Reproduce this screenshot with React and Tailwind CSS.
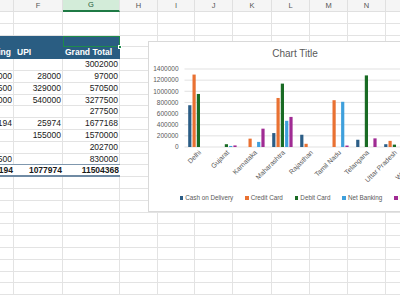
import React from 'react';

const COLS = [
  { key: 'E', w: 'w-[60px]' },
  { key: 'F', w: 'w-[49px]' },
  { key: 'G', w: 'w-[57px]' },
  { key: 'H', w: 'w-[38px]' },
  { key: 'I', w: 'w-[37px]' },
  { key: 'J', w: 'w-[38px]' },
  { key: 'K', w: 'w-[39px]' },
  { key: 'L', w: 'w-[38px]' },
  { key: 'M', w: 'w-[38px]' },
  { key: 'N', w: 'w-[38px]' },
  { key: 'O', w: 'w-[38px]' },
];

// pivot body: [net banking, upi, grand total]
const BODY = [
  ['', '', '3002000'],
  ['19000', '28000', '97000'],
  ['91500', '329000', '570500'],
  ['470000', '540000', '3277500'],
  ['', '', '277500'],
  ['811194', '25974', '1677168'],
  ['', '155000', '1570000'],
  ['', '', '202700'],
  ['236500', '', '830000'],
];

const SERIES = [
  { name: 'Cash on Delivery', color: '#2b5d86', dot: 'bg-[#2b5d86]' },
  { name: 'Credit Card', color: '#e97132', dot: 'bg-[#e97132]' },
  { name: 'Debit Card', color: '#196b24', dot: 'bg-[#196b24]' },
  { name: 'Net Banking', color: '#3fa0dc', dot: 'bg-[#3fa0dc]' },
  { name: 'UPI', color: '#a02b93', dot: 'bg-[#a02b93]' },
];

const STATES = [
  ['Delhi', [750000, 1300000, 952000, 0, 0]],
  ['Gujarat', [0, 0, 50000, 19000, 28000]],
  ['Karnataka', [0, 150000, 0, 91500, 329000]],
  ['Maharashtra', [250000, 880000, 1137500, 470000, 540000]],
  ['Rajasthan', [220000, 57500, 0, 0, 0]],
  ['Tamil Nadu', [0, 840000, 0, 811194, 25974]],
  ['Telangana', [130000, 0, 1285000, 0, 155000]],
  ['Uttar Pradesh', [50000, 110000, 42700, 0, 0]],
  ['West Bengal', [300000, 293500, 0, 236500, 0]],
];

const font = { fontFamily: '"Liberation Sans", Arial, sans-serif' };

const Cell = ({ w, className = '', children }) => (
  <div className={`${w} shrink-0 h-full overflow-hidden whitespace-nowrap border-r border-b border-[#e3e3e3] ${className}`}>
    {children}
  </div>
);

const Row = ({ children, className = '' }) => (
  <div className={`flex h-[11.8px] leading-[11px] text-[8.5px] ${className}`}>{children}</div>
);

const Empty = ({ from = 0 }) =>
  COLS.slice(from).map((c) => <Cell key={c.key} w={c.w} />);

const Chart = () => {
  const base = 81;
  const step = 11.143;
  const y = (v) => base - (v / 200000) * step;
  const left = 35.5;
  const cw = 28;
  return (
    <div className="absolute left-[148px] top-[41px] w-[294px] h-[171px] border border-[#d9d9d9] bg-white flex flex-col">
      <div className="h-[24px] leading-[23px] text-center text-[10px] text-[#595959]">Chart Title</div>
      <svg width="292" height="125" className="block">
        {[0, 1, 2, 3, 4, 5, 6, 7].map((i) => {
          const v = i * 200000;
          return (
            <g key={i}>
              <line x1={left} x2={left + cw * 9} y1={y(v)} y2={y(v)} stroke="#d9d9d9" strokeWidth="0.8" />
              <text x="29.5" y={y(v) + 2.3} textAnchor="end" fontSize="6.5" fill="#595959" style={font}>
                {v}
              </text>
            </g>
          );
        })}
        {STATES.map(([name, vals], i) => {
          const c = left + cw * i + cw / 2;
          return (
            <g key={name}>
              {vals.map((v, k) =>
                v > 0 ? (
                  <rect key={k} x={c - 10.3 + 4.3 * k} y={y(v)} width="3.2" height={base - y(v)} fill={SERIES[k].color} />
                ) : null
              )}
              <text
                x={c + 3}
                y={base + 6}
                textAnchor="end"
                fontSize="6.8"
                fill="#595959"
                style={font}
                transform={`rotate(-45 ${c + 3} ${base + 6})`}
              >
                {name}
              </text>
            </g>
          );
        })}
      </svg>
      <div className="h-[14px] flex items-center justify-center gap-[12px] text-[6.3px] text-[#595959]">
        {SERIES.map((s) => (
          <div key={s.name} className="flex items-center gap-[2px]">
            <span className={`w-[3.5px] h-[3.5px] ${s.dot}`} />
            <span className="whitespace-nowrap">{s.name}</span>
          </div>
        ))}
      </div>
    </div>
  );
};

export default function App() {
  return (
    <div className="relative w-[400px] h-[300px] overflow-hidden bg-white text-[#1a1a1a]" style={font}>
      <div className="ml-[-46px]">
        {/* column letters */}
        <div className="flex h-[12px] bg-[#f5f5f5] text-[7.5px] text-[#555]">
          {COLS.map((c) => (
            <div
              key={c.key}
              className={`${c.w} shrink-0 h-full flex items-center justify-center border-r border-b ${
                c.key === 'G'
                  ? 'bg-[#d3ecd9] border-b-2 border-b-[#1f7a45] border-r-[#e3e3e3] text-[#1f5a38]'
                  : 'border-[#e0e0e0]'
              }`}
            >
              {c.key}
            </div>
          ))}
        </div>

        <Row><Empty /></Row>
        <Row><Empty /></Row>

        {/* pivot header */}
        <Row>
          <div className="w-[60px] shrink-0 h-full bg-[#2a5d82]" />
          <div className="w-[49px] shrink-0 h-full bg-[#2a5d82]" />
          <div className="w-[57px] shrink-0 h-full bg-[#2a5d82] relative">
            <div className="absolute inset-0 border border-[#1e8a4c]" />
            <div className="absolute right-[-2px] bottom-[-2px] w-[4px] h-[4px] bg-[#1e8a4c] border border-white" />
          </div>
          <Empty from={3} />
        </Row>
        <Row className="font-bold text-white">
          <div className="w-[60px] shrink-0 h-full bg-[#2a5d82] text-right pr-[3px] overflow-hidden whitespace-nowrap">Net Banking</div>
          <div className="w-[49px] shrink-0 h-full bg-[#2a5d82] pl-[3px]">UPI</div>
          <div className="w-[57px] shrink-0 h-full bg-[#2a5d82] pl-[2px] whitespace-nowrap">Grand Total</div>
          <Empty from={3} />
        </Row>

        {BODY.map((r, i) => (
          <Row key={i}>
            {r.map((v, j) => (
              <Cell key={j} w={COLS[j].w} className="text-right pr-[1px]">
                {v}
              </Cell>
            ))}
            <Empty from={3} />
          </Row>
        ))}

        {/* grand total */}
        <Row className="font-bold">
          {['1628194', '1077974', '11504368'].map((v, j) => (
            <div
              key={j}
              className={`${COLS[j].w} shrink-0 text-right pr-[1px] border-t border-t-[#7f97ad] border-b-2 border-b-[#6f8aa3] -mt-[1px] h-[12.8px]`}
            >
              {v}
            </div>
          ))}
          <Empty from={3} />
        </Row>

        {Array.from({ length: 10 }).map((_, i) => (
          <Row key={'e' + i}><Empty /></Row>
        ))}
      </div>

      <Chart />
    </div>
  );
}
